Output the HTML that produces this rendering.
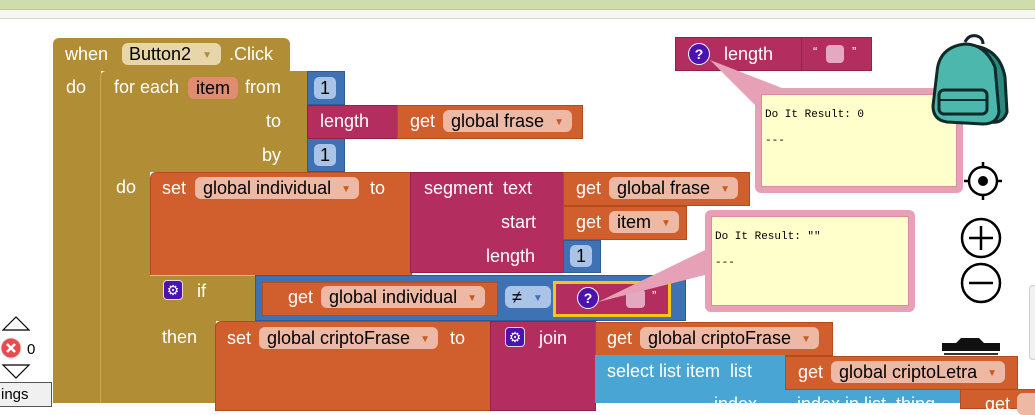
<!DOCTYPE html>
<html><head><meta charset="utf-8"><style>
*{margin:0;padding:0;box-sizing:border-box}
body{width:1035px;height:403px;overflow:hidden;background:#fff;position:relative;font-family:"Liberation Sans",sans-serif;font-size:18px;color:#fff}
.a{position:absolute}
.ol{background:#b18e35}
.or{background:#d05f2d;border:1px solid #b44b1f}
.mg{background:#b32d5e;border:1px solid #952049}
.bl{background:#3f71b5;border:1px solid #2d5a99}
.lb{background:#49a6d4}
.t{position:absolute;white-space:nowrap;line-height:20px}
.f{position:absolute;height:22px;border-radius:6px;background:#edb9a4;color:#000;padding:0 8px;line-height:22px;white-space:nowrap}
.f i{font-style:normal;color:#c85a20;font-size:10px;margin-left:10px;vertical-align:2px}
.n{position:absolute;width:22px;height:22px;border-radius:5px;background:#a9c4e7;color:#000;text-align:center;line-height:22px}
.q{position:absolute;width:22px;height:22px;border-radius:50%;background:#4b12b0;border:1px solid #fff;color:#fff;font-weight:bold;font-size:14px;text-align:center;line-height:20px}
.cm{position:absolute;background:#ffffcc;border:6px solid #e7a1b6;border-radius:6px;font-family:"Liberation Mono",monospace;font-size:11px;color:#000;padding:8px 4px;line-height:26px;box-shadow:inset 0 0 0 1px #d88da4}
.gear{position:absolute;width:20px;height:20px;background:#4b12b0;border-radius:4px;border:1px solid #ddd;color:#fff;font-size:14px;text-align:center;line-height:18px}
</style></head><body>
<div class="a" style="left:0;top:0;width:1035px;height:10px;background:#cfdcae;border-bottom:1px solid #b9c79a"></div>
<div class="a" style="left:0;top:10px;width:1035px;height:9px;background:#f6f7f2;border-bottom:1px solid #d5d5d5"></div>

<div class="a ol" style="left:53px;top:38px;width:237px;height:33px;border-radius:6px 6px 0 0"></div>
<div class="a ol" style="left:53px;top:70px;width:48px;height:333px"></div>
<div class="t" style="left:65px;top:44px">when</div>
<div class="a" style="left:122px;top:43px;width:99px;height:22px;border-radius:6px;background:#e6d6aa;color:#000;line-height:22px;padding-left:7px">Button2 <span style="color:#b18e35;font-size:10px;margin-left:6px;vertical-align:2px">▼</span></div>
<div class="t" style="left:229px;top:44px">.Click</div>
<div class="t" style="left:66px;top:77px">do</div>

<div class="a ol" style="left:100px;top:71px;width:208px;height:101px;border-radius:6px 0 0 0;border-left:1px solid #c9ab5a"></div>
<div class="a ol" style="left:100px;top:171px;width:50px;height:232px;border-left:1px solid #c9ab5a"></div>
<div class="t" style="left:114px;top:77px">for each</div>
<div class="a" style="left:188px;top:77px;width:50px;height:22px;border-radius:6px;background:#e08c70;color:#000;text-align:center;line-height:22px">item</div>
<div class="t" style="left:245px;top:77px">from</div>
<div class="t" style="left:266px;top:111px">to</div>
<div class="t" style="left:262px;top:145px">by</div>
<div class="t" style="left:116px;top:177px">do</div>
<div class="a bl" style="left:307px;top:71px;width:38px;height:34px"></div><div class="n" style="left:314px;top:77px">1</div>
<div class="a bl" style="left:307px;top:138px;width:38px;height:34px"></div><div class="n" style="left:314px;top:144px">1</div>
<div class="a mg" style="left:307px;top:105px;width:91px;height:34px"></div><div class="t" style="left:320px;top:111px">length</div>
<div class="a or" style="left:397px;top:105px;width:186px;height:34px"></div><div class="t" style="left:410px;top:111px">get</div>
<div class="f" style="left:443px;top:110px">global frase<i>▼</i></div>

<div class="a or" style="left:150px;top:172px;width:262px;height:104px;border-radius:6px 0 0 0"></div>
<div class="t" style="left:162px;top:178px">set</div>
<div class="f" style="left:195px;top:177px">global individual<i>▼</i></div>
<div class="t" style="left:370px;top:178px">to</div>
<div class="a mg" style="left:410px;top:172px;width:154px;height:101px"></div>
<div class="t" style="left:424px;top:178px">segment&nbsp; text</div>
<div class="t" style="left:501px;top:212px">start</div>
<div class="t" style="left:486px;top:246px">length</div>
<div class="a or" style="left:563px;top:172px;width:187px;height:34px"></div><div class="t" style="left:576px;top:178px">get</div>
<div class="f" style="left:609px;top:177px">global frase<i>▼</i></div>
<div class="a or" style="left:563px;top:206px;width:124px;height:34px"></div><div class="t" style="left:576px;top:212px">get</div>
<div class="f" style="left:609px;top:211px">item<i>▼</i></div>
<div class="a bl" style="left:563px;top:240px;width:38px;height:33px"></div><div class="n" style="left:570px;top:245px">1</div>

<div class="a ol" style="left:150px;top:275px;width:106px;height:46px;border-top:1px solid #d8c07e"></div>
<div class="a ol" style="left:150px;top:320px;width:66px;height:83px"></div>
<div class="gear" style="left:163px;top:280px">⚙</div>
<div class="t" style="left:197px;top:281px">if</div>
<div class="t" style="left:162px;top:327px">then</div>
<div class="a bl" style="left:255px;top:275px;width:431px;height:46px"></div>
<div class="a or" style="left:262px;top:282px;width:236px;height:34px"></div><div class="t" style="left:288px;top:287px">get</div>
<div class="f" style="left:321px;top:286px">global individual<i>▼</i></div>
<div class="a" style="left:505px;top:286px;width:46px;height:22px;border-radius:6px;background:#a9c4e7;color:#000;padding-left:7px;line-height:22px">≠ <span style="color:#3f71b5;font-size:10px;margin-left:6px;vertical-align:2px">▼</span></div>
<div class="a" style="left:553px;top:281px;width:118px;height:36px;border:3px solid #f5c518;background:#b32d5e"></div>
<div class="q" style="left:577px;top:287px">?</div>
<div class="a" style="left:626px;top:289px;width:19px;height:19px;border-radius:4px;background:#e4a9c0"></div>
<div class="t" style="left:652px;top:286px;font-size:13px">”</div>

<div class="a or" style="left:215px;top:321px;width:277px;height:90px;border-radius:6px 0 0 0"></div>
<div class="t" style="left:227px;top:328px">set</div>
<div class="f" style="left:259px;top:327px">global criptoFrase<i>▼</i></div>
<div class="t" style="left:450px;top:328px">to</div>
<div class="a mg" style="left:490px;top:321px;width:106px;height:90px"></div>
<div class="gear" style="left:505px;top:327px">⚙</div>
<div class="t" style="left:539px;top:328px">join</div>
<div class="a or" style="left:595px;top:322px;width:238px;height:34px"></div><div class="t" style="left:607px;top:328px">get</div>
<div class="f" style="left:640px;top:327px">global criptoFrase<i>▼</i></div>
<div class="a lb" style="left:595px;top:355px;width:190px;height:48px"></div>
<div class="a lb" style="left:780px;top:390px;width:180px;height:13px"></div>
<div class="t" style="left:607px;top:361px">select list item&nbsp; list</div>
<div class="t" style="left:714px;top:394px">index</div>
<div class="t" style="left:797px;top:394px">index in list&nbsp; thing</div>
<div class="a or" style="left:785px;top:356px;width:233px;height:34px"></div><div class="t" style="left:798px;top:362px">get</div>
<div class="f" style="left:831px;top:361px">global criptoLetra<i>▼</i></div>
<div class="a or" style="left:960px;top:389px;width:80px;height:20px"></div><div class="t" style="left:985px;top:394px">get</div>
<div class="f" style="left:1017px;top:393px;width:30px"></div>

<div class="a mg" style="left:675px;top:37px;width:127px;height:34px"></div>
<div class="a mg" style="left:801px;top:37px;width:71px;height:34px"></div>
<div class="q" style="left:688px;top:43px">?</div>
<div class="t" style="left:724px;top:44px">length</div>
<div class="t" style="left:813px;top:42px;font-size:13px">“</div>
<div class="a" style="left:826px;top:45px;width:18px;height:18px;border-radius:4px;background:#e4a9c0"></div>
<div class="t" style="left:852px;top:42px;font-size:13px">”</div>

<svg class="a" style="left:0;top:0" width="1035" height="403">
<polygon points="710,60 800,95 760,110" fill="#e7a1b6"/>
<polygon points="598,302 705,250 705,275" fill="#e7a1b6"/>
</svg>
<div class="cm" style="left:755px;top:88px;width:208px;height:105px">Do It Result: 0<br>---</div>
<div class="cm" style="left:705px;top:210px;width:210px;height:102px">Do It Result: ""<br>---</div>

<svg class="a" style="left:925px;top:32px" width="95" height="95" viewBox="0 0 95 95">
<path d="M40 10 Q44 2 52 4 Q58 6 58 12" fill="none" stroke="#123" stroke-width="3"/>
<path d="M50 14 Q75 18 80 45 L82 80 Q78 92 65 90 L55 88 Z" fill="#2a8a80" stroke="#0f2a28" stroke-width="3"/>
<path d="M12 40 Q14 15 40 12 Q60 12 70 35 L74 80 Q72 92 58 92 L22 90 Q8 88 8 74 Z" fill="#4cb8ad" stroke="#0f2a28" stroke-width="3"/>
<rect x="14" y="58" width="48" height="24" rx="5" fill="#4cb8ad" stroke="#0f2a28" stroke-width="3"/>
<line x1="14" y1="68" x2="62" y2="68" stroke="#0f2a28" stroke-width="2"/>
</svg>

<svg class="a" style="left:955px;top:150px" width="60" height="170">
<circle cx="28" cy="31" r="14" fill="none" stroke="#000" stroke-width="2.5"/>
<circle cx="28" cy="31" r="5" fill="#000"/>
<path d="M28 12v6M28 44v6M9 31h6M41 31h6" stroke="#000" stroke-width="2.5"/>
<circle cx="26" cy="88" r="19" fill="#fff" stroke="#000" stroke-width="2.5"/>
<path d="M14 88h24M26 76v24" stroke="#000" stroke-width="2.5"/>
<circle cx="26" cy="133" r="19" fill="#fff" stroke="#000" stroke-width="2.5"/>
<path d="M14 133h24" stroke="#000" stroke-width="2.5"/>
</svg>
<svg class="a" style="left:940px;top:335px" width="65" height="22">
<path d="M2 8h14l5-5h18l5 5h16v8H2z" fill="#111"/>
<rect x="4" y="18" width="54" height="2" fill="#333"/>
</svg>
<div class="a" style="left:1029px;top:285px;width:8px;height:75px;border:1px solid #ccc;border-radius:4px;background:#f2f2f2"></div>

<svg class="a" style="left:0;top:315px" width="40" height="65">
<path d="M3 15L16 2L29 15Z" fill="#fff" stroke="#000" stroke-width="1.2"/>
<circle cx="11" cy="33" r="10" fill="#e84c4c" stroke="#ddd"/>
<path d="M7 29l8 8M15 29l-8 8" stroke="#fff" stroke-width="2.5"/>
<path d="M3 50L16 63L29 50Z" fill="#fff" stroke="#000" stroke-width="1.2"/>
</svg>
<div class="t" style="left:27px;top:340px;color:#000;font-size:15px">0</div>
<div class="a" style="left:-2px;top:382px;width:54px;height:25px;border:1px solid #555;background:#f0f0f0;color:#000;font-size:15px;line-height:24px;padding-left:2px">ings</div>
</body></html>
